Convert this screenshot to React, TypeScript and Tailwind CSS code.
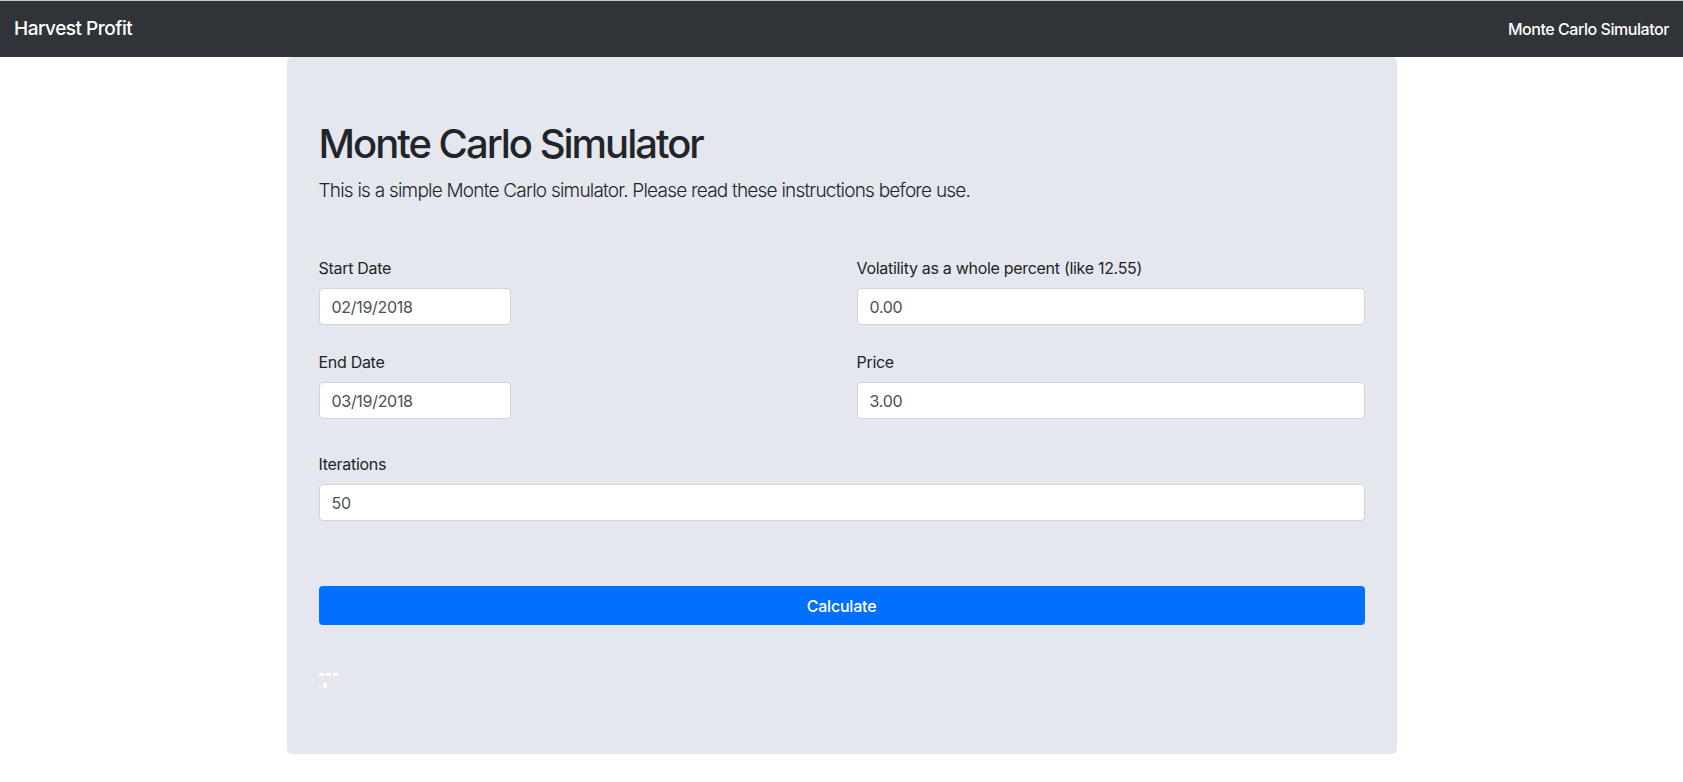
import React from "react";

const font = { fontFamily: 'Inter, "Noto Sans", "Liberation Sans", sans-serif' };

function Field({ label, value, className }: { label: string; value: string; className?: string }) {
  return (
    <div className="flex flex-col">
      <label className="text-[16px] leading-[24px] tracking-[-0.3px] text-[#212529] mb-[8px]">{label}</label>
      <input
        readOnly
        value={value}
        className={`h-[37px] bg-white border border-[#ced4da] rounded-[4px] px-[12px] text-[16px] tracking-[-0.3px] text-[#495057] outline-none ${className ?? "w-full"}`}
      />
    </div>
  );
}

export default function App() {
  return (
    <div className="min-h-[782px] bg-white" style={font}>
      <nav className="h-[57px] bg-[#303337] border-t border-[#c8c8c8] flex items-center justify-between pl-[14px] pr-[14px]">
        <span className="text-white text-[19px] font-medium tracking-[-0.5px]">Harvest Profit</span>
        <span className="text-white text-[16px] font-medium tracking-[-0.45px]">Monte Carlo Simulator</span>
      </nav>
      <div className="w-[1110px] mx-auto">
        <div className="bg-[#e4e7ed] rounded-[5px] pt-[63px] pb-[66px] px-[32px]">
          <h1 className="text-[40px] leading-[48px] font-medium text-[#212529] tracking-[-2px] mb-[8px]">
            Monte Carlo Simulator
          </h1>
          <p className="text-[19px] leading-[30px] font-light text-[#212529] tracking-[-0.78px]">
            This is a simple Monte Carlo simulator. Please read these instructions before use.
          </p>
          <div className="mt-[50px] grid grid-cols-2 gap-x-[30px]">
            <div className="flex flex-col gap-[25px]">
              <Field label="Start Date" value="02/19/2018" className="w-[192px]" />
              <Field label="End Date" value="03/19/2018" className="w-[192px]" />
            </div>
            <div className="flex flex-col gap-[25px]">
              <Field label="Volatility as a whole percent (like 12.55)" value="0.00" />
              <Field label="Price" value="3.00" />
            </div>
          </div>
          <div className="mt-[33px]">
            <Field label="Iterations" value="50" />
          </div>
          <button className="mt-[65px] w-full h-[39px] bg-[#0070ff] rounded-[4px] text-white text-[16px] font-medium tracking-[-0.2px]">
            Calculate
          </button>
          <div className="mt-[44px] flex flex-col gap-[7px]">
            <div className="flex gap-[2px] h-[7px] items-end">
              <span className="w-[5px] h-[3px] bg-white" />
              <span className="w-[5px] h-[3px] bg-white" />
              <span className="w-[5px] h-[3px] bg-white" />
            </div>
            <div className="flex gap-[2px] h-[5px] items-end">
              <span className="w-[2px] h-[2px] bg-white" />
              <span className="w-[4px] h-[5px] bg-white" />
            </div>
          </div>
        </div>
      </div>
    </div>
  );
}
